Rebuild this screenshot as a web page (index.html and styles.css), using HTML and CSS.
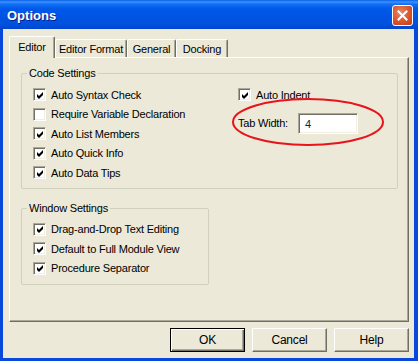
FILE: index.html
```html
<!DOCTYPE html>
<html lang="en">
<head>
	<meta charset="UTF-8">
	<title>Options</title>
	<link rel="stylesheet" href="styles.css">
</head>
<body>
	<div class="window">
		<div class="titlebar">
			<span class="title">Options</span>
			<span class="close">
				<svg width="11" height="11" viewBox="0 0 11 11"><path d="M1.5 1.5 L9.5 9.5 M9.5 1.5 L1.5 9.5" stroke="#fff" stroke-width="2" stroke-linecap="square"/></svg>
			</span>
		</div>
		<div class="client">
			<div class="tabs">
				<div class="tab active">Editor</div>
				<div class="tab t-format">Editor Format</div>
				<div class="tab t-general">General</div>
				<div class="tab t-docking">Docking</div>
			</div>
			<div class="panel">
				<fieldset class="group code">
					<legend>Code Settings</legend>
					<div class="cols">
						<div class="col left">
							<div class="row"><span class="box on"><svg width="9" height="9" viewBox="0 0 9 9"><path d="M1 3 L3 5 L7 1 L7 4 L3 8 L1 6 Z"/></svg></span>Auto Syntax Check</div>
							<div class="row"><span class="box"></span>Require Variable Declaration</div>
							<div class="row"><span class="box on"><svg width="9" height="9" viewBox="0 0 9 9"><path d="M1 3 L3 5 L7 1 L7 4 L3 8 L1 6 Z"/></svg></span>Auto List Members</div>
							<div class="row"><span class="box on"><svg width="9" height="9" viewBox="0 0 9 9"><path d="M1 3 L3 5 L7 1 L7 4 L3 8 L1 6 Z"/></svg></span>Auto Quick Info</div>
							<div class="row"><span class="box on"><svg width="9" height="9" viewBox="0 0 9 9"><path d="M1 3 L3 5 L7 1 L7 4 L3 8 L1 6 Z"/></svg></span>Auto Data Tips</div>
						</div>
						<div class="col right">
							<div class="row"><span class="box on"><svg width="9" height="9" viewBox="0 0 9 9"><path d="M1 3 L3 5 L7 1 L7 4 L3 8 L1 6 Z"/></svg></span>Auto Indent</div>
							<div class="tabwidth">
								<span>Tab Width:</span>
								<span class="field">4</span>
							</div>
							<!-- red mark drawn over the screenshot -->
							<svg class="ring" width="156" height="50" viewBox="0 0 156 50"><ellipse cx="78" cy="25" rx="75" ry="23" fill="none" stroke="#e8141c" stroke-width="2"/></svg>
						</div>
					</div>
				</fieldset>
				<fieldset class="group winset">
					<legend>Window Settings</legend>
					<div class="row"><span class="box on"><svg width="9" height="9" viewBox="0 0 9 9"><path d="M1 3 L3 5 L7 1 L7 4 L3 8 L1 6 Z"/></svg></span>Drag-and-Drop Text Editing</div>
					<div class="row"><span class="box on"><svg width="9" height="9" viewBox="0 0 9 9"><path d="M1 3 L3 5 L7 1 L7 4 L3 8 L1 6 Z"/></svg></span>Default to Full Module View</div>
					<div class="row"><span class="box on"><svg width="9" height="9" viewBox="0 0 9 9"><path d="M1 3 L3 5 L7 1 L7 4 L3 8 L1 6 Z"/></svg></span>Procedure Separator</div>
				</fieldset>
			</div>
			<div class="buttons">
				<div class="btn default">OK</div>
				<div class="btn">Cancel</div>
				<div class="btn">Help</div>
			</div>
		</div>
	</div>
</body>
</html>
```

FILE: styles.css
```css
body {
	margin:0;
	font-family:"Liberation Sans", Arial, sans-serif;
	font-size:11px;
	letter-spacing:-0.2px;
	color:#000;
}

.window {
	width:418px;
	height:361px;
	background:#0a48dc;
	display:flex;
	flex-direction:column;
}

/* title bar */
.titlebar {
	height:29px;
	flex:none;
	box-sizing:border-box;
	padding:2px 5px 0 7px;
	display:flex;
	align-items:center;
	justify-content:space-between;
	background:linear-gradient(to bottom, #0a5ee8 0, #3a93ff 2px, #1270f5 4px, #0058e8 9px, #0054e3 18px, #0050dc 25px, #0045cf 29px);
}
.title {
	color:#fff;
	font-weight:bold;
	font-size:13px;
	letter-spacing:0;
	text-shadow:1px 1px #0a1f8a;
}
.close {
	width:21px;
	height:21px;
	box-sizing:border-box;
	border:1px solid #fff;
	border-radius:3px;
	background:radial-gradient(circle at 40% 35%, #e9876a 0, #d9542c 55%, #c23c12 100%);
	display:flex;
	align-items:center;
	justify-content:center;
}

.client {
	flex:1;
	margin:0 4px 3px 3px;
	padding:7px 5px 6px 6px;
	background:#ece9d8;
	display:flex;
	flex-direction:column;
}

/* tabs */
.tabs {
	display:flex;
	align-items:flex-end;
	height:21px;
}
.tab {
	height:18px;
	box-sizing:border-box;
	padding-top:3px;
	text-align:center;
	border-top:1px solid #fff;
	border-left:1px solid #fff;
	border-right:1px solid #716f64;
	border-radius:2px 2px 0 0;
	box-shadow:inset -1px 0 #aca899;
	background:#ece9d8;
}
.tab.active {
	width:46px;
	height:22px;
	padding-top:4px;
	margin-bottom:-1px;
	position:relative;
	z-index:1;
}
.t-format { width:72px; }
.t-general { width:49px; }
.t-docking { width:52px; }

.panel {
	height:265px;
	box-sizing:border-box;
	padding:9px 0 0 11px;
	border-top:1px solid #fff;
	border-left:1px solid #fff;
	border-right:1px solid #716f64;
	border-bottom:1px solid #716f64;
	box-shadow:inset -1px -1px #aca899;
	background:#ece9d8;
}

/* group boxes */
.group {
	margin:0;
	border:1px solid #d0d0bf;
	border-radius:2px;
	padding:5px 0 5px 11px;
	min-inline-size:0;
	box-sizing:border-box;
}
.group legend {
	line-height:13px;
	padding:0 2px;
	margin-left:-6px;
}
.code { width:377px; }
.winset {
	width:188px;
	margin-top:13px;
	padding-bottom:6px;
}

.cols {
	display:flex;
}
.col.left { width:205px; }
.col.right { position:relative; }

.row {
	height:19.5px;
	display:flex;
	align-items:center;
	white-space:nowrap;
}
.box {
	width:13px;
	height:13px;
	box-sizing:border-box;
	margin-right:5px;
	flex:none;
	background:#fff;
	border:1px solid;
	border-color:#aca899 #fff #fff #aca899;
	box-shadow:inset 1px 1px #716f64, inset -1px -1px #f1efe2;
	display:flex;
	align-items:center;
	justify-content:center;
}
.box svg { display:block; margin:1px 0 0 1px; }

.tabwidth {
	margin-top:8px;
	display:flex;
	align-items:center;
}
.field {
	width:60px;
	height:21px;
	box-sizing:border-box;
	margin-left:10px;
	padding:4px 0 0 6px;
	background:#fff;
	color:#0a1f5a;
	border:1px solid;
	border-color:#aca899 #fff #fff #aca899;
	box-shadow:inset 1px 1px #716f64, inset -1px -1px #f1efe2;
}
.ring {
	position:absolute;
	left:-8px;
	top:12px;
}

/* buttons */
.buttons {
	margin-top:6px;
	display:flex;
	justify-content:flex-end;
	gap:7px;
}
.btn {
	width:75px;
	height:24px;
	box-sizing:border-box;
	display:flex;
	align-items:center;
	justify-content:center;
	border:1px solid;
	border-color:#fff #716f64 #716f64 #fff;
	box-shadow:inset -1px -1px #aca899;
	font-size:12px;
}
.btn.default {
	border-color:#000;
	box-shadow:inset 1px 1px #fff, inset -1px -1px #716f64, inset -2px -2px #aca899;
}
```
